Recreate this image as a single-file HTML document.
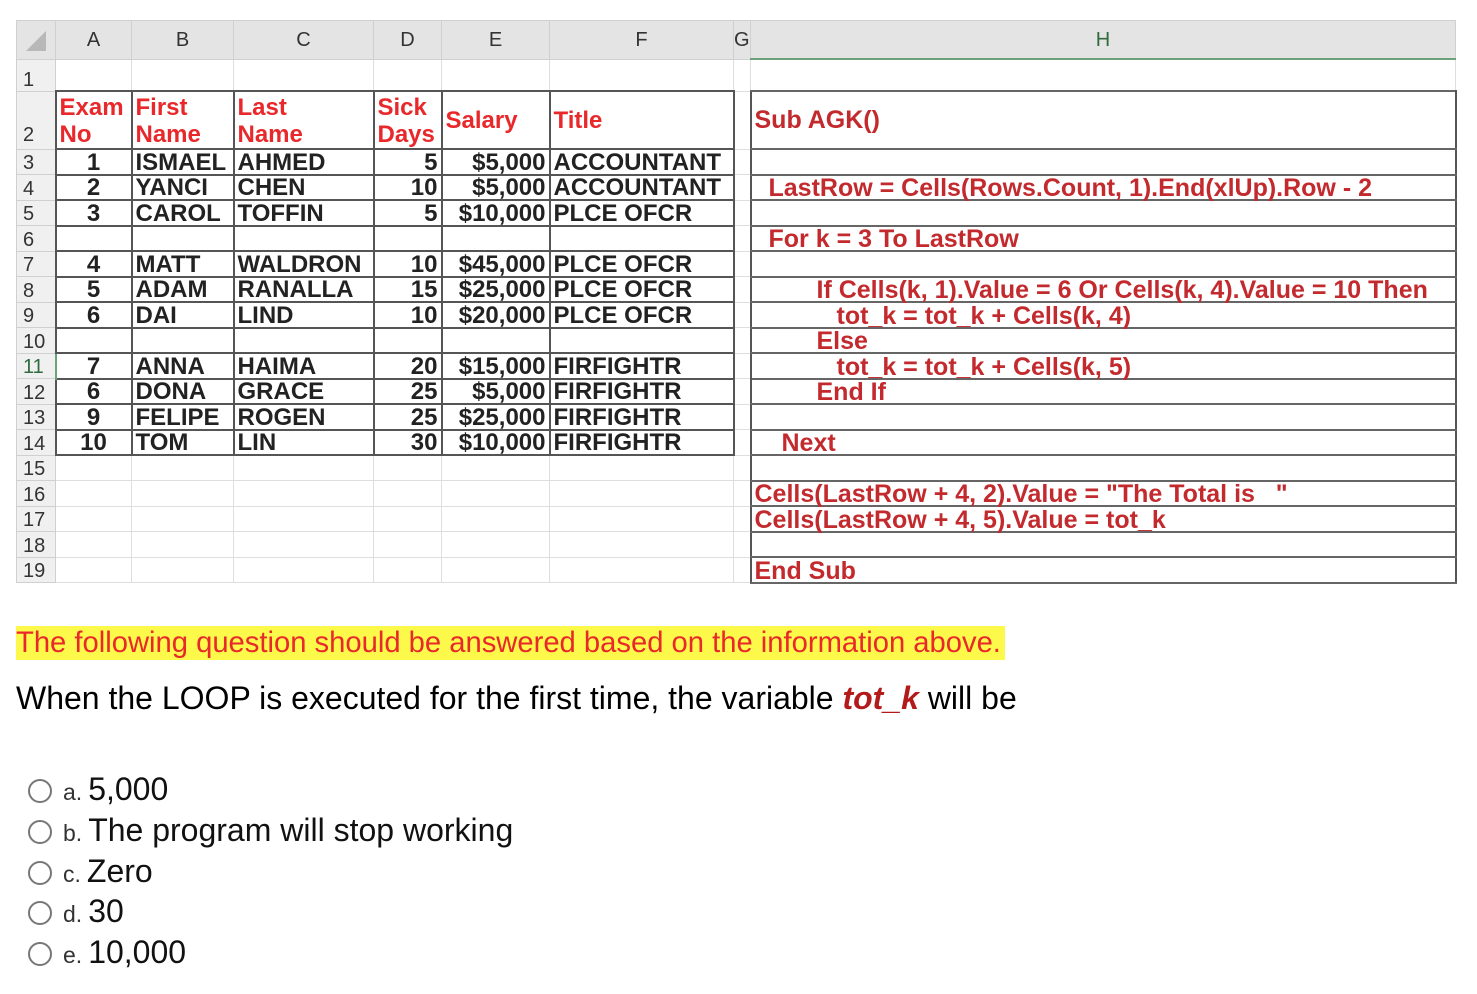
<!DOCTYPE html>
<html><head><meta charset="utf-8"><style>
body{margin:0;width:1477px;height:994px;background:#fff;position:relative;overflow:hidden;font-family:"Liberation Sans",Arial,sans-serif}
table{position:absolute;left:16px;top:20px;border-collapse:collapse;table-layout:fixed;font-family:"Liberation Sans Narrow","Liberation Sans",sans-serif;font-weight:bold;font-size:24px;color:#222}
td{border:1px solid #dedede;padding:0 3px;white-space:nowrap;overflow:visible;line-height:22px;height:22px;vertical-align:bottom}
tr{height:25.5px}
tr.h td{background:#e4e4e4;font-weight:normal;font-size:20px;text-align:center;color:#333;height:37px;vertical-align:middle;border-color:#d0d0d0}
td.rn{background:#f0f0f0;font-weight:normal;font-size:20px;color:#333;text-align:left;padding-left:6px;border-color:#d0d0d0}
td.b{border:2px solid #555}
td.r{text-align:right}
td.c{text-align:center}
.red{color:#e8282a}
td.code{color:#c32a2e;font-size:25px;border-left:2px solid #555;border-right:2px solid #555;border-top:2px solid #666;border-bottom:2px solid #666}
tr.hd td{line-height:27px;height:54px;vertical-align:bottom}
.q1{position:absolute;left:16px;top:626px;height:34px;width:989px;background:#fdf94a;color:#e8282a;font-size:29.2px;line-height:34px;white-space:nowrap;overflow:hidden}
.q2{position:absolute;left:16px;top:679px;font-size:32px;color:#000;line-height:38px;white-space:nowrap}
.q2 b{color:#b31b1b;font-style:italic}
.opt{position:absolute;left:28px;font-size:32px;color:#111;line-height:38px;white-space:nowrap}
.opt i{display:inline-block;width:24px;height:24px;border:2px solid #777;border-radius:50%;vertical-align:-3px;margin-right:11px;box-sizing:border-box}
.opt s{text-decoration:none;font-size:23px;color:#333;margin-right:6px}
</style></head><body>
<table>
<colgroup><col style="width:39px"><col style="width:76px"><col style="width:102px"><col style="width:140px"><col style="width:68px"><col style="width:108px"><col style="width:184px"><col style="width:17px"><col style="width:705px"></colgroup>
<tr class="h"><td style="background:#e4e4e4"><svg width="30" height="30" style="display:block"><polygon points="26,6 26,26 6,26" fill="#b8b8b8"/></svg></td><td>A</td><td>B</td><td>C</td><td>D</td><td>E</td><td>F</td><td style="text-align:left;padding:0">G</td><td style="border-bottom:2px solid #6aa37a;color:#2f6b3f">H</td></tr>
<tr style="height:32px"><td class="rn">1</td><td></td><td></td><td></td><td></td><td></td><td></td><td></td><td></td></tr>
<tr class="hd" style="height:58px"><td class="rn" style="vertical-align:bottom">2</td><td class="b red">Exam<br>No</td><td class="b red">First<br>Name</td><td class="b red">Last<br>Name</td><td class="b red">Sick<br>Days</td><td class="b red" style="vertical-align:middle">Salary</td><td class="b red" style="vertical-align:middle">Title</td><td></td><td class="code" style="vertical-align:middle">Sub AGK()</td></tr>
<tr><td class="rn">3</td><td class="b c">1</td><td class="b">ISMAEL</td><td class="b">AHMED</td><td class="b r">5</td><td class="b r">$5,000</td><td class="b">ACCOUNTANT</td><td></td><td class="code"></td></tr>
<tr><td class="rn">4</td><td class="b c">2</td><td class="b">YANCI</td><td class="b">CHEN</td><td class="b r">10</td><td class="b r">$5,000</td><td class="b">ACCOUNTANT</td><td></td><td class="code" style="padding-left:17px">LastRow = Cells(Rows.Count, 1).End(xlUp).Row - 2</td></tr>
<tr><td class="rn">5</td><td class="b c">3</td><td class="b">CAROL</td><td class="b">TOFFIN</td><td class="b r">5</td><td class="b r">$10,000</td><td class="b">PLCE OFCR</td><td></td><td class="code"></td></tr>
<tr><td class="rn">6</td><td class="b"></td><td class="b"></td><td class="b"></td><td class="b"></td><td class="b"></td><td class="b"></td><td></td><td class="code" style="padding-left:17px">For k = 3 To LastRow</td></tr>
<tr><td class="rn">7</td><td class="b c">4</td><td class="b">MATT</td><td class="b">WALDRON</td><td class="b r">10</td><td class="b r">$45,000</td><td class="b">PLCE OFCR</td><td></td><td class="code"></td></tr>
<tr><td class="rn">8</td><td class="b c">5</td><td class="b">ADAM</td><td class="b">RANALLA</td><td class="b r">15</td><td class="b r">$25,000</td><td class="b">PLCE OFCR</td><td></td><td class="code" style="padding-left:65px">If Cells(k, 1).Value = 6 Or Cells(k, 4).Value = 10 Then</td></tr>
<tr><td class="rn">9</td><td class="b c">6</td><td class="b">DAI</td><td class="b">LIND</td><td class="b r">10</td><td class="b r">$20,000</td><td class="b">PLCE OFCR</td><td></td><td class="code" style="padding-left:85px">tot_k = tot_k + Cells(k, 4)</td></tr>
<tr><td class="rn">10</td><td class="b"></td><td class="b"></td><td class="b"></td><td class="b"></td><td class="b"></td><td class="b"></td><td></td><td class="code" style="padding-left:65px">Else</td></tr>
<tr><td class="rn" style="color:#2f6b3f;border-right:2px solid #6aa37a">11</td><td class="b c">7</td><td class="b">ANNA</td><td class="b">HAIMA</td><td class="b r">20</td><td class="b r">$15,000</td><td class="b">FIRFIGHTR</td><td></td><td class="code" style="padding-left:85px;border-top:1px solid #6aa37a;border-bottom:1px solid #6aa37a">tot_k = tot_k + Cells(k, 5)</td></tr>
<tr><td class="rn">12</td><td class="b c">6</td><td class="b">DONA</td><td class="b">GRACE</td><td class="b r">25</td><td class="b r">$5,000</td><td class="b">FIRFIGHTR</td><td></td><td class="code" style="padding-left:65px">End If</td></tr>
<tr><td class="rn">13</td><td class="b c">9</td><td class="b">FELIPE</td><td class="b">ROGEN</td><td class="b r">25</td><td class="b r">$25,000</td><td class="b">FIRFIGHTR</td><td></td><td class="code"></td></tr>
<tr><td class="rn">14</td><td class="b c">10</td><td class="b">TOM</td><td class="b">LIN</td><td class="b r">30</td><td class="b r">$10,000</td><td class="b">FIRFIGHTR</td><td></td><td class="code" style="padding-left:30px">Next</td></tr>
<tr><td class="rn">15</td><td></td><td></td><td></td><td></td><td></td><td></td><td></td><td class="code"></td></tr>
<tr><td class="rn">16</td><td></td><td></td><td></td><td></td><td></td><td></td><td></td><td class="code">Cells(LastRow + 4, 2).Value = "The Total is &nbsp;&nbsp;"</td></tr>
<tr><td class="rn">17</td><td></td><td></td><td></td><td></td><td></td><td></td><td></td><td class="code">Cells(LastRow + 4, 5).Value = tot_k</td></tr>
<tr><td class="rn">18</td><td></td><td></td><td></td><td></td><td></td><td></td><td></td><td class="code"></td></tr>
<tr><td class="rn">19</td><td></td><td></td><td></td><td></td><td></td><td></td><td></td><td class="code">End Sub</td></tr>
</table>
<div class="q1">The following question should be answered based on the information above.</div>
<div class="q2">When the LOOP is executed for the first time, the variable <b>tot_k</b> will be</div>
<div class="opt" style="top:770px"><i></i><s>a.</s>5,000</div>
<div class="opt" style="top:811px"><i></i><s>b.</s>The program will stop working</div>
<div class="opt" style="top:852px"><i></i><s>c.</s>Zero</div>
<div class="opt" style="top:892px"><i></i><s>d.</s>30</div>
<div class="opt" style="top:933px"><i></i><s>e.</s>10,000</div>
</body></html>
